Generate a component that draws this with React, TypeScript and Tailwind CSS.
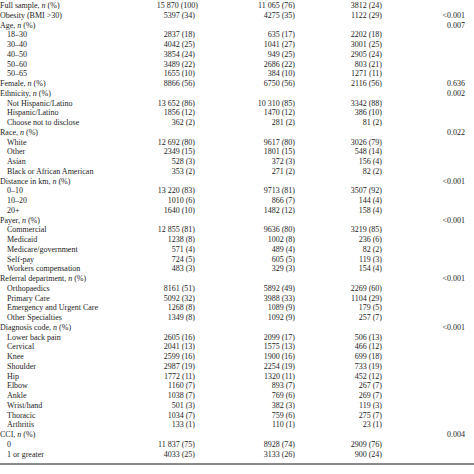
import React from "react";

type Row = [string, boolean, string, string, string, string];

const rows: Row[] = [
  ["Full sample, n (%)", false, "15 870 (100)", "11 065 (76)", "3812 (24)", ""],
  ["Obesity (BMI >30)", false, "5397 (34)", "4275 (35)", "1122 (29)", "<0.001"],
  ["Age, n (%)", false, "", "", "", "0.007"],
  ["18–30", true, "2837 (18)", "635 (17)", "2202 (18)", ""],
  ["30–40", true, "4042 (25)", "1041 (27)", "3001 (25)", ""],
  ["40–50", true, "3854 (24)", "949 (25)", "2905 (24)", ""],
  ["50–60", true, "3489 (22)", "2686 (22)", "803 (21)", ""],
  ["50–65", true, "1655 (10)", "384 (10)", "1271 (11)", ""],
  ["Female, n (%)", false, "8866 (56)", "6750 (56)", "2116 (56)", "0.636"],
  ["Ethnicity, n (%)", false, "", "", "", "0.002"],
  ["Not Hispanic/Latino", true, "13 652 (86)", "10 310 (85)", "3342 (88)", ""],
  ["Hispanic/Latino", true, "1856 (12)", "1470 (12)", "386 (10)", ""],
  ["Choose not to disclose", true, "362 (2)", "281 (2)", "81 (2)", ""],
  ["Race, n (%)", false, "", "", "", "0.022"],
  ["White", true, "12 692 (80)", "9617 (80)", "3026 (79)", ""],
  ["Other", true, "2349 (15)", "1801 (15)", "548 (14)", ""],
  ["Asian", true, "528 (3)", "372 (3)", "156 (4)", ""],
  ["Black or African American", true, "353 (2)", "271 (2)", "82 (2)", ""],
  ["Distance in km, n (%)", false, "", "", "", "<0.001"],
  ["0–10", true, "13 220 (83)", "9713 (81)", "3507 (92)", ""],
  ["10–20", true, "1010 (6)", "866 (7)", "144 (4)", ""],
  ["20+", true, "1640 (10)", "1482 (12)", "158 (4)", ""],
  ["Payer, n (%)", false, "", "", "", "<0.001"],
  ["Commercial", true, "12 855 (81)", "9636 (80)", "3219 (85)", ""],
  ["Medicaid", true, "1238 (8)", "1002 (8)", "236 (6)", ""],
  ["Medicare/government", true, "571 (4)", "489 (4)", "82 (2)", ""],
  ["Self-pay", true, "724 (5)", "605 (5)", "119 (3)", ""],
  ["Workers compensation", true, "483 (3)", "329 (3)", "154 (4)", ""],
  ["Referral department, n (%)", false, "", "", "", "<0.001"],
  ["Orthopaedics", true, "8161 (51)", "5892 (49)", "2269 (60)", ""],
  ["Primary Care", true, "5092 (32)", "3988 (33)", "1104 (29)", ""],
  ["Emergency and Urgent Care", true, "1268 (8)", "1089 (9)", "179 (5)", ""],
  ["Other Specialties", true, "1349 (8)", "1092 (9)", "257 (7)", ""],
  ["Diagnosis code, n (%)", false, "", "", "", "<0.001"],
  ["Lower back pain", true, "2605 (16)", "2099 (17)", "506 (13)", ""],
  ["Cervical", true, "2041 (13)", "1575 (13)", "466 (12)", ""],
  ["Knee", true, "2599 (16)", "1900 (16)", "699 (18)", ""],
  ["Shoulder", true, "2987 (19)", "2254 (19)", "733 (19)", ""],
  ["Hip", true, "1772 (11)", "1320 (11)", "452 (12)", ""],
  ["Elbow", true, "1160 (7)", "893 (7)", "267 (7)", ""],
  ["Ankle", true, "1038 (7)", "769 (6)", "269 (7)", ""],
  ["Wrist/hand", true, "501 (3)", "382 (3)", "119 (3)", ""],
  ["Thoracic", true, "1034 (7)", "759 (6)", "275 (7)", ""],
  ["Arthritis", true, "133 (1)", "110 (1)", "23 (1)", ""],
  ["CCI, n (%)", false, "", "", "", "0.004"],
  ["0", true, "11 837 (75)", "8928 (74)", "2909 (76)", ""],
  ["1 or greater", true, "4033 (25)", "3133 (26)", "900 (24)", ""],
];

function Label({ text }: { text: string }) {
  const parts = text.split(", n ");
  if (parts.length === 2) {
    return (
      <>
        {parts[0]}, <span className="italic">n</span> {parts[1]}
      </>
    );
  }
  return <>{text}</>;
}

export default function App() {
  return (
    <div className="w-[474px] h-[474px] bg-white text-[#1c1c1c] overflow-hidden" style={{ fontFamily: '"Liberation Serif", "Times New Roman", serif' }}>
      <div className="pt-[1px] text-[8px]">
        {rows.map((r, i) => (
          <div key={i} className="grid grid-cols-[150px_45px_100px_87px_83px] h-[9.76px] leading-[9.76px] whitespace-nowrap">
            <div className={r[1] ? "pl-[7px]" : "pl-0"}>
              <Label text={r[0]} />
            </div>
            <div className={i === 0 ? "text-right mr-[-3px]" : "text-right"}>{r[2]}</div>
            <div className="text-right">{r[3]}</div>
            <div className="text-right">{r[4]}</div>
            <div className="text-right">{r[5]}</div>
          </div>
        ))}
      </div>
      <div className="mt-[4px] h-[2px] bg-[#8a8a8a]" />
    </div>
  );
}
